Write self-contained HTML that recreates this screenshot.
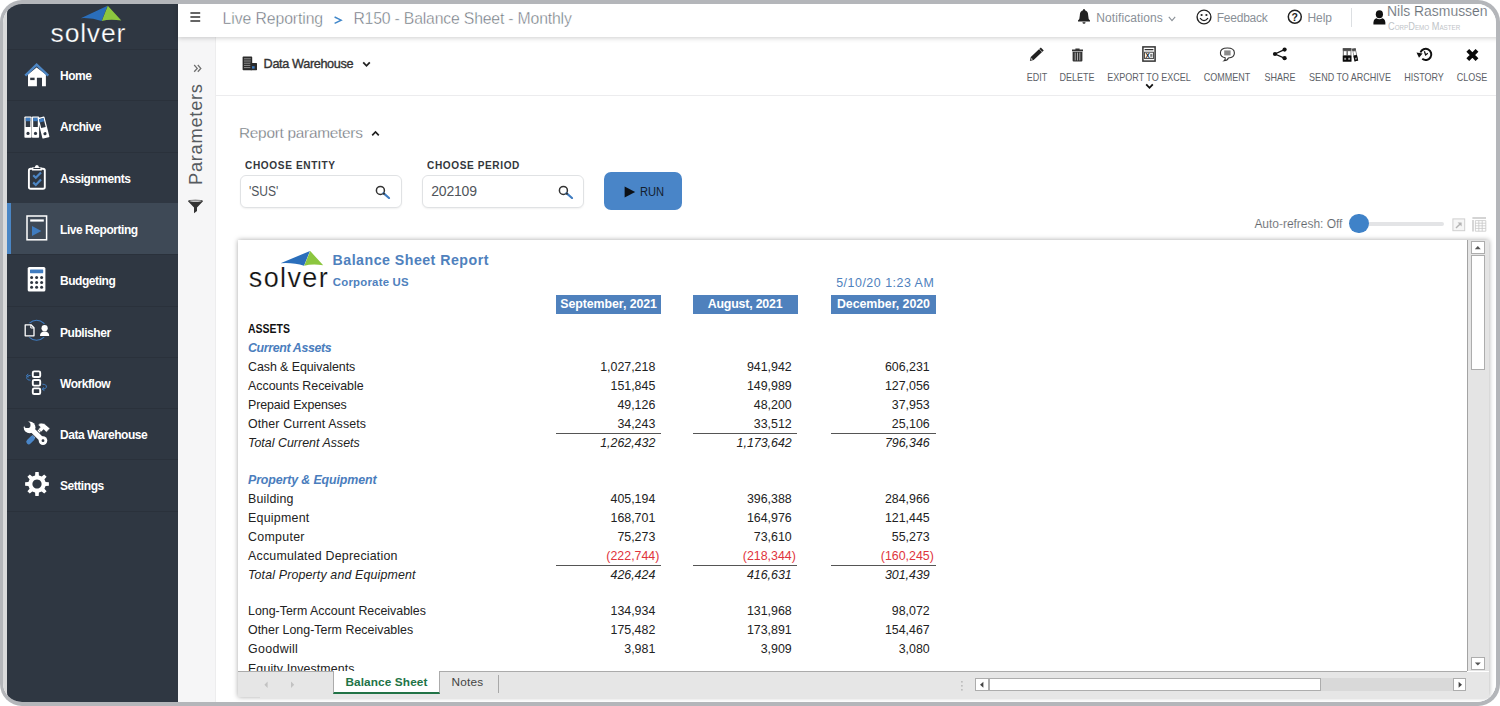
<!DOCTYPE html>
<html lang="en">
<head>
<meta charset="utf-8">
<title>Solver - Live Reporting - R150 - Balance Sheet - Monthly</title>
<style>
*{box-sizing:border-box;margin:0;padding:0}
html,body{width:1500px;height:706px;overflow:hidden;background:#fff;font-family:"Liberation Sans",sans-serif;}
body{position:relative}
.abs{position:absolute}
#frame{position:absolute;left:0;top:0;width:1500px;height:706px;border-radius:22px;background:#b4b6ba;overflow:hidden}
#inner{position:absolute;left:3px;top:4px;width:1493px;height:698px;border-radius:19px;background:#fff;overflow:hidden}
/* everything inside #app is positioned in page coordinates */
#app{position:absolute;left:-3px;top:-4px;width:1500px;height:706px}
#leftstrip{position:absolute;left:3px;top:0;width:5px;height:706px;background:#d9dadb}
#sidebar{position:absolute;left:7px;top:0;width:171px;height:706px;background:#2f3742;border-radius:14px 0 0 14px}
.mi{position:absolute;left:0;width:171px;height:51.3px;box-shadow:inset 0 1px 0 #2a313b;color:#fff;font-weight:bold;font-size:12.5px}
.mi span{position:absolute;left:53px;top:20px;white-space:nowrap;letter-spacing:-0.45px;font-size:12px;line-height:14px}
.mi.active{background:#3e4956;box-shadow:inset 4px 0 0 #4a86c5}
.mi svg{position:absolute}
#topbar{position:absolute;left:178px;top:0;width:1322px;height:37px;background:#fff;box-shadow:0 1px 5px rgba(0,0,0,.2);z-index:5}
#pstrip{position:absolute;left:178px;top:37px;width:38px;height:669px;background:#f6f6f7;border-right:1px solid #ededee}
#content{position:absolute;left:216px;top:37px;width:1284px;height:669px;background:#fff}
.crumb{position:absolute;top:9.5px;font-size:15.8px;line-height:18px;-webkit-text-stroke:0.4px #fff;color:#69717a;white-space:nowrap}
.tt{top:11px;font-size:12px;color:#8a9097;white-space:nowrap;line-height:14px}
.tb{position:absolute;font-size:10.3px;line-height:12px;color:#5c6167;white-space:nowrap;text-align:center;transform:translateX(-50%) scaleX(0.875)}
.lbl{position:absolute;font-size:11.2px;line-height:13px;font-weight:bold;color:#33373c;letter-spacing:0.72px;white-space:nowrap;transform-origin:0 50%;transform:scaleX(0.9)}
.inp{position:absolute;height:33px;border:1px solid #e0e2e4;border-radius:6px;background:#fff;font-size:14px;line-height:16px;color:#50555b;padding:7.4px 0 0 8.2px;box-shadow:0 1px 2px rgba(0,0,0,.06);white-space:nowrap}
#panel{position:absolute;left:238px;top:240px;width:1251px;height:457px;background:#fff;box-shadow:0 0 5px rgba(0,0,0,.35)}
.r{position:absolute;font-size:12.4px;line-height:16px;color:#222;white-space:nowrap}
.n{position:absolute;font-size:12.4px;line-height:16px;color:#222;white-space:nowrap;text-align:right;width:120px}
.i{font-style:italic}
.red{color:#e0343c}
.hd{position:absolute;height:19px;background:#4f81bd;color:#fff;font-weight:bold;font-size:12.4px;line-height:16px;text-align:center;padding-top:1.6px;white-space:nowrap}
.sbtn{background:#fff;border:1px solid #adadad}
.ul{position:absolute;height:1px;background:#555}
</style>
</head>
<body>
<div id="frame"><div id="inner"><div id="app">
<div id="leftstrip"></div>
<div id="sidebar">
<!-- logo -->
<svg class="abs" style="left:70px;top:3px" width="50" height="22" viewBox="77 3 50 22">
<path d="M80.8,18.2 L107.6,5.8 L101.6,21 Q92,17.6 80.8,18.2Z" fill="#2a6ebb"/>
<path d="M107.8,5.8 L121.3,20.6 Q110,18.8 101.8,21Z" fill="#8cc63f"/>
</svg>
<div class="abs" id="logotxt" style="left:43.6px;top:18px;font-size:26.5px;color:#fff;letter-spacing:0.8px;white-space:nowrap;line-height:30px;-webkit-text-stroke:0.25px #2f3742">solver</div>

<div class="mi" style="top:49px"><span>Home</span>
<svg style="left:17px;top:13px" width="26" height="25" viewBox="24 62 26 25">
<path d="M28,74.6 L36.6,67.4 L45.9,74.6 V86.2 H42 V77.7 H36.9 V86.2 H28Z" fill="#fff"/>
<rect x="30.2" y="77.7" width="4.4" height="2.4" fill="#2f3742"/>
<path d="M25.3,75.6 L36.6,64.6 L48.3,75.6" fill="none" stroke="#4d86c4" stroke-width="2.4" stroke-linejoin="miter"/>
</svg></div>

<div class="mi" style="top:100.3px"><span>Archive</span>
<svg style="left:16px;top:15px" width="28" height="24" viewBox="23 115 28 24">
<g><rect x="24.4" y="116.4" width="7.2" height="21.3" rx="0.8" fill="#fff"/><rect x="25.7" y="117.8" width="4.6" height="9.2" fill="#2f3742"/><rect x="25.7" y="117.8" width="4.6" height="3.4" fill="#3f7cc0"/><circle cx="28" cy="133.4" r="1.6" fill="#2f3742"/></g>
<g transform="translate(7.5 0)"><rect x="24.4" y="116.4" width="7.2" height="21.3" rx="0.8" fill="#fff"/><rect x="25.7" y="117.8" width="4.6" height="9.2" fill="#2f3742"/><rect x="25.7" y="117.8" width="4.6" height="3.4" fill="#3f7cc0"/><circle cx="28" cy="133.4" r="1.6" fill="#2f3742"/></g>
<g transform="rotate(-14 43 127) translate(15.3 0.6)"><rect x="24.4" y="116.4" width="7.2" height="21.3" rx="0.8" fill="#fff"/><rect x="25.7" y="117.8" width="4.6" height="9.2" fill="#2f3742"/><rect x="25.7" y="117.8" width="4.6" height="3.4" fill="#3f7cc0"/><circle cx="28" cy="133.4" r="1.6" fill="#2f3742"/></g>
</svg></div>

<div class="mi" style="top:151.6px"><span>Assignments</span>
<svg style="left:19px;top:11px" width="22" height="28" viewBox="26 162 22 28">
<rect x="28.9" y="167.7" width="15.9" height="20.1" rx="1.8" fill="none" stroke="#fff" stroke-width="1.9"/>
<path d="M32,169.4 V166.6 H34.8 Q34.9,164.1 36.9,164.1 Q38.9,164.1 39,166.6 H41.8 V169.4Z" fill="#fff"/>
<rect x="33.4" y="167" width="7" height="1" fill="#2f3742"/>
<path d="M33.2,174.2 L35.8,176.8 L41,171.4" fill="none" stroke="#4d86c4" stroke-width="2.2"/>
<path d="M33.2,181.4 L35.8,184 L41,178.6" fill="none" stroke="#4d86c4" stroke-width="2.2"/>
</svg></div>

<div class="mi active" style="top:202.9px"><span>Live Reporting</span>
<svg style="left:18px;top:11.1px" width="24" height="28" viewBox="25 214 24 28">
<rect x="27" y="216" width="19.6" height="23.8" fill="none" stroke="#fff" stroke-width="1.5"/>
<rect x="30.2" y="219.4" width="13.6" height="2.2" fill="#fff"/>
<path d="M32,226 L41.4,231 L32,236Z" fill="#3f7cc0"/>
</svg></div>

<div class="mi" style="top:254.2px"><span>Budgeting</span>
<svg style="left:19px;top:11px" width="22" height="28" viewBox="26 265 22 28">
<rect x="27.7" y="267" width="17.7" height="24.6" rx="1.6" fill="#fff"/>
<rect x="30" y="269.4" width="13.2" height="3.8" rx="0.6" fill="#3f7cc0"/>
<g fill="#2f3742"><circle cx="31.6" cy="277.6" r="1.5"/><circle cx="36.6" cy="277.6" r="1.5"/><circle cx="41.6" cy="277.6" r="1.5"/><circle cx="31.6" cy="282.4" r="1.5"/><circle cx="36.6" cy="282.4" r="1.5"/><circle cx="41.6" cy="282.4" r="1.5"/><circle cx="31.6" cy="287.2" r="1.5"/><circle cx="36.6" cy="287.2" r="1.5"/><circle cx="41.6" cy="287.2" r="1.5"/></g>
</svg></div>

<div class="mi" style="top:305.5px"><span>Publisher</span>
<svg style="left:16px;top:12px" width="28" height="26" viewBox="23 318 28 26">
<circle cx="36.6" cy="330.3" r="10" fill="none" stroke="#3f7cc0" stroke-width="1.1"/>
<rect x="23.6" y="323.2" width="12" height="14" fill="#2f3742"/>
<rect x="38.8" y="324" width="11.6" height="13" fill="#2f3742"/>
<path d="M25.2,324.8 H31 L34,327.8 V335.8 H25.2Z" fill="none" stroke="#fff" stroke-width="1.3" stroke-linejoin="round"/>
<path d="M30.8,324.8 V328 H34" fill="none" stroke="#fff" stroke-width="1"/>
<circle cx="44.6" cy="328.2" r="3.1" fill="#fff"/>
<path d="M40,336 Q40,331.4 44.6,331.4 Q49.2,331.4 49.2,336Z" fill="#fff"/>
</svg></div>

<div class="mi" style="top:356.8px"><span>Workflow</span>
<svg style="left:17px;top:12px" width="26" height="28" viewBox="24 369 26 28">
<g fill="none" stroke="#fff" stroke-width="1.9"><rect x="32.8" y="371.4" width="7.4" height="5.6" rx="1.3"/><rect x="32.8" y="380" width="7.4" height="5.6" rx="1.3"/><rect x="32.8" y="388.4" width="7.4" height="5.6" rx="1.3"/></g>
<path d="M30.6,375.4 Q26.2,375.4 26.8,378.4 Q27.4,380.4 30.6,380.2" fill="none" stroke="#3f7cc0" stroke-width="1"/>
<path d="M28.2,373.8 L26.4,376 L28.8,377" fill="none" stroke="#3f7cc0" stroke-width="1"/>
<path d="M42.4,384.2 Q46.8,384.2 46.4,387.2 Q45.8,389.4 42.4,389" fill="none" stroke="#3f7cc0" stroke-width="1"/>
<path d="M44,387.4 L42.2,389.2 L44.4,390.6" fill="none" stroke="#3f7cc0" stroke-width="1"/>
</svg></div>

<div class="mi" style="top:408.1px"><span>Data Warehouse</span>
<svg style="left:15px;top:12px" width="30" height="26" viewBox="22 420 30 26">
<path d="M41.6,428.6 L32,438.4" stroke="#fff" stroke-width="3" fill="none"/>
<path d="M32.4,438.2 L28.8,441.8" stroke="#4a86c8" stroke-width="5" stroke-linecap="round" fill="none"/>
<path d="M29.6,427.4 L43,440.6" stroke="#2f3742" stroke-width="6.6" fill="none"/>
<circle cx="29.6" cy="427.4" r="5.9" fill="#fff"/>
<path d="M29.6,427.4 L43,440.6" stroke="#fff" stroke-width="5" fill="none"/>
<circle cx="43" cy="440.6" r="4.3" fill="#fff"/>
<circle cx="43" cy="440.7" r="1.4" fill="#2f3742"/>
<circle cx="27.3" cy="424.9" r="3.2" fill="#2f3742"/>
<path d="M27.3,424.9 L22.6,420.2" stroke="#2f3742" stroke-width="5.2" fill="none"/>
<path d="M37.6,425.2 Q40.4,421.8 44.2,423.6 L50,428.4 L46.4,432.2 L43.6,429.6 L41.2,432 L38.4,429.2 L40.2,427.2 Q39.4,425.4 37.6,425.2Z" fill="#fff" stroke="#2f3742" stroke-width="0.6"/>
</svg></div>

<div class="mi" style="top:459.4px"><span>Settings</span>
<svg style="left:17.6px;top:12.8px" width="24" height="24" viewBox="0 0 24 24">
<path fill-rule="evenodd" fill="#fff" d="M10.08,3.41 L10.31,0.12 L13.69,0.12 L13.92,3.41 L16.72,4.57 L19.21,2.40 L21.60,4.79 L19.43,7.28 L20.59,10.08 L23.88,10.31 L23.88,13.69 L20.59,13.92 L19.43,16.72 L21.60,19.21 L19.21,21.60 L16.72,19.43 L13.92,20.59 L13.69,23.88 L10.31,23.88 L10.08,20.59 L7.28,19.43 L4.79,21.60 L2.40,19.21 L4.57,16.72 L3.41,13.92 L0.12,13.69 L0.12,10.31 L3.41,10.08 L4.57,7.28 L2.40,4.79 L4.79,2.40 L7.28,4.57Z M12,7.4 a4.6,4.6 0 1 0 0.01,0Z"/>
</svg></div>
<div class="mi" style="top:510.7px;height:1px"></div>
</div>
<div id="pstrip"><div class="abs" style="left:-178px;top:-37px;width:1500px;height:706px">
<svg class="abs" style="left:192.6px;top:64.4px" width="10" height="9" viewBox="0 0 10 9"><path d="M1.2,1 L4.2,4.4 L1.2,7.8 M4.8,1 L7.8,4.4 L4.8,7.8" fill="none" stroke="#707070" stroke-width="1.3"/></svg>
<div class="abs" style="left:185px;top:185.4px;transform-origin:0 0;transform:rotate(-90deg);font-size:18.3px;line-height:22px;letter-spacing:0.72px;color:#565b60;white-space:nowrap">Parameters</div>
<svg class="abs" style="left:187px;top:199px" width="17" height="15" viewBox="0 0 17 15"><path d="M1,2.2 Q1,0.8 8.4,0.8 Q16,0.8 16,2.2 L10,8.4 V12 L7,14.2 V8.4Z" fill="#333"/><ellipse cx="8.5" cy="2.1" rx="6.2" ry="0.7" fill="#f6f6f7"/></svg>
</div></div>
<div id="content"><div class="abs" style="left:-216px;top:-37px;width:1500px;height:706px">

<!-- report parameters -->
<div class="abs" style="left:239px;top:124.4px;font-size:15.4px;line-height:18px;color:#6b7178;letter-spacing:-0.28px;white-space:nowrap;-webkit-text-stroke:0.3px #fff">Report parameters</div>
<svg class="abs" style="left:371px;top:129.6px" width="9" height="7" viewBox="0 0 9 7"><path d="M1.2,5.4 L4.5,2 L7.8,5.4" fill="none" stroke="#222" stroke-width="1.7"/></svg>
<div class="lbl" style="left:245px;top:159.2px">CHOOSE ENTITY</div>
<div class="lbl" style="left:427px;top:159.2px;letter-spacing:0.68px">CHOOSE PERIOD</div>
<div class="inp" style="left:239.6px;top:175px;width:162.2px"><span style="display:inline-block;transform-origin:0 50%;transform:scaleX(0.86)">'SUS'</span></div>
<div class="inp" style="left:422px;top:175px;width:162.2px;letter-spacing:-0.18px">202109</div>
<svg class="abs mag" style="left:375.4px;top:184.6px" width="16" height="14" viewBox="0 0 16 14"><circle cx="5.4" cy="5.4" r="4" fill="none" stroke="#333" stroke-width="1.5"/><path d="M8.4,8.2 L14,13" stroke="#3f7cc0" stroke-width="2.2" stroke-linecap="round"/><path d="M8.2,8 L9.6,9.2" stroke="#333" stroke-width="1.8"/></svg>
<svg class="abs mag" style="left:557.8px;top:184.6px" width="16" height="14" viewBox="0 0 16 14"><circle cx="5.4" cy="5.4" r="4" fill="none" stroke="#333" stroke-width="1.5"/><path d="M8.4,8.2 L14,13" stroke="#3f7cc0" stroke-width="2.2" stroke-linecap="round"/><path d="M8.2,8 L9.6,9.2" stroke="#333" stroke-width="1.8"/></svg>
<div class="abs" style="left:603.6px;top:171.8px;width:78px;height:38.2px;border-radius:7px;background:#4985c8"></div>
<svg class="abs" style="left:623.6px;top:186.2px" width="12" height="12" viewBox="0 0 12 12"><path d="M0.6,0.4 L11.2,6 L0.6,11.6Z" fill="#0c1016"/></svg>
<div class="abs" style="left:640.2px;top:185.4px;font-size:12px;line-height:14px;color:#14202e;white-space:nowrap;transform-origin:0 50%;transform:scaleX(0.93)">RUN</div>
<!-- auto refresh -->
<div class="abs" style="left:1254.4px;top:217px;font-size:12px;line-height:14px;color:#62676c;white-space:nowrap;letter-spacing:-0.03px;-webkit-text-stroke:0.12px #fff">Auto-refresh: Off</div>
<div class="abs" style="left:1356px;top:222.2px;width:88.4px;height:4.2px;border-radius:2px;background:#e3e4e6"></div>
<div class="abs" style="left:1349.2px;top:214px;width:19.4px;height:19.4px;border-radius:50%;background:#3f82c8"></div>
<svg class="abs" style="left:1452px;top:218px" width="14" height="14" viewBox="0 0 14 14"><rect x="0.9" y="0.9" width="11.8" height="11.8" fill="#f6f6f6" stroke="#cfcfcf" stroke-width="1"/><path d="M4,10 L8.6,5.4" stroke="#b3b3b3" stroke-width="1.4"/><path d="M5.6,4.4 H9.6 V8.4Z" fill="#b3b3b3"/></svg>
<svg class="abs" style="left:1472px;top:216.6px" width="15" height="15" viewBox="0 0 15 15"><g stroke="#c6c6c6" fill="none"><path d="M0.4,1 H14 " stroke-width="1.4"/><path d="M1,3 V14.4" stroke-width="1.4"/><path d="M3.4,3.6 H13.8 V14.2 H3.4Z M3.4,6.2 H13.8 M3.4,8.8 H13.8 M3.4,11.4 H13.8 M6.8,3.6 V14.2 M10.2,3.6 V14.2" stroke-width="0.8"/></g></svg>
<!-- toolbar bottom line -->
<div class="abs" style="left:216px;top:95px;width:1284px;height:1px;background:#ececee"></div>
<!-- Data warehouse selector -->
<svg class="abs" style="left:242px;top:56px" width="16" height="15" viewBox="0 0 16 15">
<rect x="0.6" y="0.6" width="9.6" height="13.6" rx="0.8" fill="#2b2b2b"/>
<g stroke="#bbb" stroke-width="0.7"><path d="M2,2.8 H8.8 M2,5 H8.8 M2,7.2 H8.8 M2,9.4 H8.8 M2,11.6 H8.8"/></g>
<rect x="8.4" y="7" width="6.6" height="7.2" rx="0.6" fill="#2b2b2b"/>
<rect x="10" y="10.2" width="2.6" height="2.4" fill="#3f7cc0"/>
</svg>
<div class="abs" style="left:263.6px;top:56.6px;font-size:12.7px;color:#333;letter-spacing:-0.37px;white-space:nowrap;line-height:14px;-webkit-text-stroke:0.35px #333">Data Warehouse</div>
<svg class="abs" style="left:361.6px;top:61.4px" width="9" height="7" viewBox="0 0 9 7"><path d="M1.2,1.4 L4.5,4.8 L7.8,1.4" fill="none" stroke="#222" stroke-width="1.8"/></svg>

<!-- toolbar icons -->
<!-- edit -->
<svg class="abs" style="left:1028px;top:46px" width="18" height="17" viewBox="1028 46 18 17">
<path d="M1029.90,60.90 L1033.65,60.12 L1043.75,50.52 L1040.85,47.48 L1030.75,57.08Z" fill="#222"/>
<path d="M1042.15,52.04 L1039.26,48.99" stroke="#fff" stroke-width="0.6"/>
<path d="M1033.03,59.47 L1031.37,57.73 L1030.70,60.14Z" fill="#aaa"/>
</svg>
<div class="tb" style="left:1037px;top:72px">EDIT</div>
<!-- delete -->
<svg class="abs" style="left:1071px;top:48px" width="13" height="14" viewBox="0 0 13 14"><path d="M4.4,0.4 H8.6 V1.6 H12 V3.2 H1 V1.6 H4.4Z" fill="#333"/><path d="M1.6,3.8 H11.4 V12.6 Q11.4,13.6 10.4,13.6 H2.6 Q1.6,13.6 1.6,12.6Z" fill="#333"/><path d="M4.2,4.6 V12.4 M6.5,4.6 V12.4 M8.8,4.6 V12.4" stroke="#bbb" stroke-width="0.9"/></svg>
<div class="tb" style="left:1077.4px;top:72px">DELETE</div>
<!-- export -->
<svg class="abs" style="left:1142px;top:46.4px" width="14" height="16" viewBox="0 0 14 16"><rect x="0.9" y="0.9" width="12.2" height="14.2" fill="none" stroke="#333" stroke-width="1.5"/><path d="M2.6,3.6 H11.4" stroke="#333" stroke-width="1.4"/><rect x="2.6" y="6.2" width="8.8" height="6.4" fill="#fff" stroke="#333" stroke-width="0.9"/><text x="3.4" y="11.8" font-family="Liberation Sans, sans-serif" font-weight="bold" font-size="6.4" fill="#111">X</text><path d="M8.2,8.4 H10.4 M8.2,9.6 H10.4 M8.2,10.8 H10.4" stroke="#111" stroke-width="0.6"/></svg>
<div class="tb" style="left:1148.7px;top:72px">EXPORT TO EXCEL</div>
<svg class="abs" style="left:1144.6px;top:82.6px" width="9" height="7" viewBox="0 0 9 7"><path d="M1.2,1.4 L4.5,4.8 L7.8,1.4" fill="none" stroke="#111" stroke-width="1.8"/></svg>
<!-- comment -->
<svg class="abs" style="left:1219px;top:46.6px" width="17" height="15" viewBox="0 0 17 15"><path d="M8.4,1 Q15.4,1 15.4,6 Q15.4,10.6 9.4,11 Q8.6,13.4 5,13.8 Q6.6,12.4 6.2,10.8 Q1.4,9.8 1.4,6 Q1.4,1 8.4,1Z" fill="#fff" stroke="#333" stroke-width="1.1"/><rect x="5.2" y="3.4" width="6.4" height="5" fill="#8a8a8a"/></svg>
<div class="tb" style="left:1227.4px;top:72px">COMMENT</div>
<!-- share -->
<svg class="abs" style="left:1272px;top:47.4px" width="16" height="14" viewBox="0 0 16 14"><path d="M12.4,2.6 L3,7 L12.4,11.2" fill="none" stroke="#111" stroke-width="1.3"/><circle cx="12.6" cy="2.6" r="2.1" fill="#111"/><circle cx="3" cy="7" r="2.1" fill="#111"/><circle cx="12.6" cy="11.2" r="2.1" fill="#111"/></svg>
<div class="tb" style="left:1280.2px;top:72px">SHARE</div>
<!-- archive -->
<svg class="abs" style="left:1342px;top:47px" width="18" height="16" viewBox="1342 47 18 16">
<rect x="1342.8" y="48.2" width="8.6" height="13.4" fill="#777"/>
<rect x="1342.8" y="48.2" width="8.6" height="2.4" fill="#4a4a4a"/>
<rect x="1343.9" y="51.2" width="2.5" height="4" fill="#fff"/><rect x="1348" y="51.2" width="2.5" height="4" fill="#fff"/>
<rect x="1342.8" y="55.6" width="8.6" height="6" fill="#0a0a0a"/>
<rect x="1344.2" y="57.8" width="1.9" height="2" fill="#9a9a9a"/><rect x="1348.2" y="57.8" width="1.9" height="2" fill="#9a9a9a"/>
<path d="M1352,48.8 L1355.6,48.2 L1358.2,60.6 L1354.6,61.5Z" fill="#777"/>
<path d="M1352,48.8 L1355.6,48.2 L1356,50.2 L1352.4,50.9Z" fill="#4a4a4a"/>
<path d="M1353.2,51.6 L1355.4,51.2 L1356.2,54.8 L1354,55.3Z" fill="#fff"/>
<path d="M1353.3,55.8 L1356.9,55 L1358.2,60.6 L1354.6,61.5Z" fill="#0a0a0a"/>
<path d="M1355,57.9 L1356.6,57.5 L1357,59.3 L1355.4,59.7Z" fill="#9a9a9a"/>
</svg>
<div class="tb" style="left:1350px;top:72px">SEND TO ARCHIVE</div>
<!-- history -->
<svg class="abs" style="left:1415px;top:46px" width="19" height="17" viewBox="1415 46 19 17">
<path d="M1420.44,52.48 A5.6,5.6 0 1 1 1422.25,58.81" fill="none" stroke="#111" stroke-width="2"/>
<path d="M1416.5,52.6 L1422.6,53.6 L1419,57.8Z" fill="#111"/>
<path d="M1424.4,51.2 L1425.6,54.9 L1427.8,53.2" fill="none" stroke="#111" stroke-width="1.3"/>
</svg>
<div class="tb" style="left:1424.4px;top:72px">HISTORY</div>
<!-- close -->
<svg class="abs" style="left:1465px;top:47.6px" width="15" height="14" viewBox="0 0 15 14"><path d="M2.8,2.4 L12,11.6 M12,2.4 L2.8,11.6" stroke="#0a0a0a" stroke-width="4" stroke-linecap="butt"/></svg>
<div class="tb" style="left:1472px;top:72px">CLOSE</div>
</div></div>
<div id="topbar">
<!-- hamburger -->
<svg class="abs" style="left:12px;top:11px" width="11" height="12" viewBox="0 0 11 12"><path d="M0.4,2 H10.2 M0.4,6 H10.2 M0.4,10 H10.2" stroke="#333" stroke-width="1.7"/></svg>
<div class="crumb" style="left:44.6px;letter-spacing:-0.1px">Live Reporting</div>
<svg class="abs" style="left:155px;top:15px" width="10" height="10" viewBox="0 0 10 10"><path d="M1.6,2 L8.2,5.2 L1.6,8.4" fill="none" stroke="#3f86c9" stroke-width="1.4"/></svg>
<div class="crumb" style="left:175.4px;letter-spacing:-0.19px">R150 - Balance Sheet - Monthly</div>

<!-- bell -->
<svg class="abs" style="left:899px;top:8px" width="14" height="17" viewBox="0 0 14 17"><path d="M7,1 Q8,1 8,2.2 Q11.2,3.2 11.2,7.4 Q11.2,11 13,12.6 V13.4 H1 V12.6 Q2.8,11 2.8,7.4 Q2.8,3.2 6,2.2 Q6,1 7,1Z M5.4,14.2 H8.6 Q8.4,15.8 7,15.8 Q5.6,15.8 5.4,14.2Z" fill="#222"/></svg>
<div class="abs tt" style="left:918.3px;letter-spacing:0.1px">Notifications</div>
<svg class="abs" style="left:989.6px;top:16px" width="8" height="6" viewBox="0 0 8 6"><path d="M0.8,0.8 L4,4.6 L7.2,0.8" fill="none" stroke="#8a9097" stroke-width="1.1"/></svg>
<!-- smiley -->
<svg class="abs" style="left:1018px;top:8.6px" width="16" height="16" viewBox="0 0 16 16"><circle cx="8" cy="8" r="6.9" fill="none" stroke="#222" stroke-width="1.4"/><circle cx="5.6" cy="6" r="1.1" fill="#222"/><circle cx="10.4" cy="6" r="1.1" fill="#222"/><path d="M4,9.2 Q8,14 12,9.2" fill="none" stroke="#222" stroke-width="1.3"/></svg>
<div class="abs tt" style="left:1038.7px;letter-spacing:-0.22px">Feedback</div>
<!-- help -->
<svg class="abs" style="left:1109px;top:8.9px" width="16" height="16" viewBox="0 0 16 16"><circle cx="7.8" cy="7.8" r="6.5" fill="none" stroke="#222" stroke-width="1.5"/><text x="7.8" y="11.6" text-anchor="middle" font-family="Liberation Sans, sans-serif" font-weight="bold" font-size="10.5" fill="#222">?</text></svg>
<div class="abs tt" style="left:1129.5px;letter-spacing:-0.1px">Help</div>
<div class="abs" style="left:1172.5px;top:8px;width:1px;height:19px;background:#dcdfe2"></div>
<!-- user -->
<svg class="abs" style="left:1194.6px;top:9.6px" width="13" height="15" viewBox="0 0 13 15"><ellipse cx="6.4" cy="4.2" rx="3.6" ry="4" fill="#111"/><path d="M0.4,14.6 Q0,9 3.4,8.2 Q6.4,10.4 9.4,8.2 Q12.8,9 12.4,14.6Z" fill="#111"/></svg>
<div class="abs" style="left:1209.4px;top:2.4px;font-size:15.5px;color:#6b727a;white-space:nowrap;line-height:18px;transform-origin:0 50%;transform:scaleX(0.898);-webkit-text-stroke:0.15px #fff">Nils Rasmussen</div>
<div class="abs" style="left:1209.6px;top:20.8px;font-size:10.3px;color:#c0c4c8;white-space:nowrap;font-variant:small-caps;line-height:11px;transform-origin:0 50%;transform:scaleX(0.895)">CorpDemo Master</div>
</div>
<div id="panel">
<div class="abs" id="sheet" style="left:0;top:0;width:1230px;height:431px;overflow:hidden">
<!-- report logo -->
<svg class="abs" style="left:40.0px;top:9.0px" width="48" height="19" viewBox="278 249 48 19">
<path d="M280.6,263.2 L310,251 L304,265.8 Q294,262.4 280.6,263.2Z" fill="#2a6ebb"/>
<path d="M310.2,251 L323.2,265.2 Q312,263.4 304.2,265.8Z" fill="#8cc63f"/>
</svg>
<div class="abs" style="left:10.8px;top:23.2px;font-size:27px;line-height:30px;color:#111;letter-spacing:1.36px;white-space:nowrap;-webkit-text-stroke:0.2px #fff">solver</div>
<div class="abs" style="left:94.6px;top:12.2px;font-size:14.2px;line-height:17px;font-weight:bold;color:#4f81bd;letter-spacing:0.48px;white-space:nowrap">Balance Sheet Report</div>
<div class="abs" style="left:94.8px;top:35.2px;font-size:11.4px;line-height:14px;font-weight:bold;color:#4f81bd;letter-spacing:0.22px;white-space:nowrap">Corporate US</div>
<div class="abs" style="left:598.2px;top:34.5px;font-size:12.4px;line-height:16px;color:#4f81bd;letter-spacing:0.52px;white-space:nowrap">5/10/20 1:23 AM</div>
<div class="hd" style="left:318px;top:54.5px;width:105.2px;letter-spacing:-0.08px">September, 2021</div>
<div class="hd" style="left:454.6px;top:54.5px;width:105px;letter-spacing:-0.2px">August, 2021</div>
<div class="hd" style="left:592.7px;top:54.5px;width:105.5px;letter-spacing:-0.05px">December, 2020</div>
<div class="r" style="left:10.0px;top:80.8px;letter-spacing:0px;color:#111;font-weight:bold;transform-origin:0 50%;transform:scaleX(0.845)">ASSETS</div>
<div class="r" style="left:10.0px;top:100.0px;letter-spacing:-0.36px;color:#4a7dbd;font-weight:bold;font-style:italic">Current Assets</div>
<div class="r" style="left:10.0px;top:119.0px;letter-spacing:-0.05px;color:#222">Cash &amp; Equivalents</div>
<div class="n" style="left:297.3px;top:119.0px">1,027,218</div>
<div class="n" style="left:433.7px;top:119.0px">941,942</div>
<div class="n" style="left:571.7px;top:119.0px">606,231</div>
<div class="r" style="left:10.0px;top:137.9px;letter-spacing:-0.01px;color:#222">Accounts Receivable</div>
<div class="n" style="left:297.3px;top:137.9px">151,845</div>
<div class="n" style="left:433.7px;top:137.9px">149,989</div>
<div class="n" style="left:571.7px;top:137.9px">127,056</div>
<div class="r" style="left:10.0px;top:156.9px;letter-spacing:-0.12px;color:#222">Prepaid Expenses</div>
<div class="n" style="left:297.3px;top:156.9px">49,126</div>
<div class="n" style="left:433.7px;top:156.9px">48,200</div>
<div class="n" style="left:571.7px;top:156.9px">37,953</div>
<div class="r" style="left:10.0px;top:175.9px;letter-spacing:0.12px;color:#222">Other Current Assets</div>
<div class="n" style="left:297.3px;top:175.9px">34,243</div>
<div class="n" style="left:433.7px;top:175.9px">33,512</div>
<div class="n" style="left:571.7px;top:175.9px">25,106</div>
<div class="r" style="left:10.0px;top:194.8px;letter-spacing:0.02px;color:#222;font-style:italic">Total Current Assets</div>
<div class="n i" style="left:297.3px;top:194.8px">1,262,432</div>
<div class="n i" style="left:433.7px;top:194.8px">1,173,642</div>
<div class="n i" style="left:571.7px;top:194.8px">796,346</div>
<div class="r" style="left:10.0px;top:232.1px;letter-spacing:-0.12px;color:#4a7dbd;font-weight:bold;font-style:italic">Property &amp; Equipment</div>
<div class="r" style="left:10.0px;top:250.9px;letter-spacing:0.19px;color:#222">Building</div>
<div class="n" style="left:297.3px;top:250.9px">405,194</div>
<div class="n" style="left:433.7px;top:250.9px">396,388</div>
<div class="n" style="left:571.7px;top:250.9px">284,966</div>
<div class="r" style="left:10.0px;top:270.0px;letter-spacing:0.25px;color:#222">Equipment</div>
<div class="n" style="left:297.3px;top:270.0px">168,701</div>
<div class="n" style="left:433.7px;top:270.0px">164,976</div>
<div class="n" style="left:571.7px;top:270.0px">121,445</div>
<div class="r" style="left:10.0px;top:289.1px;letter-spacing:0.29px;color:#222">Computer</div>
<div class="n" style="left:297.3px;top:289.1px">75,273</div>
<div class="n" style="left:433.7px;top:289.1px">73,610</div>
<div class="n" style="left:571.7px;top:289.1px">55,273</div>
<div class="r" style="left:10.0px;top:307.8px;letter-spacing:0.21px;color:#222">Accumulated Depreciation</div>
<div class="n red" style="left:301.4px;top:307.8px">(222,744)</div>
<div class="n red" style="left:437.8px;top:307.8px">(218,344)</div>
<div class="n red" style="left:575.8px;top:307.8px">(160,245)</div>
<div class="r" style="left:10.0px;top:326.8px;letter-spacing:0.15px;color:#222;font-style:italic">Total Property and Equipment</div>
<div class="n i" style="left:297.3px;top:326.8px">426,424</div>
<div class="n i" style="left:433.7px;top:326.8px">416,631</div>
<div class="n i" style="left:571.7px;top:326.8px">301,439</div>
<div class="r" style="left:10.0px;top:363.0px;letter-spacing:0.01px;color:#222">Long-Term Account Receivables</div>
<div class="n" style="left:297.3px;top:363.0px">134,934</div>
<div class="n" style="left:433.7px;top:363.0px">131,968</div>
<div class="n" style="left:571.7px;top:363.0px">98,072</div>
<div class="r" style="left:10.0px;top:382.2px;letter-spacing:0.02px;color:#222">Other Long-Term Receivables</div>
<div class="n" style="left:297.3px;top:382.2px">175,482</div>
<div class="n" style="left:433.7px;top:382.2px">173,891</div>
<div class="n" style="left:571.7px;top:382.2px">154,467</div>
<div class="r" style="left:10.0px;top:401.1px;letter-spacing:0.33px;color:#222">Goodwill</div>
<div class="n" style="left:297.3px;top:401.1px">3,981</div>
<div class="n" style="left:433.7px;top:401.1px">3,909</div>
<div class="n" style="left:571.7px;top:401.1px">3,080</div>
<div class="r" style="left:10.0px;top:421.0px;letter-spacing:0.11px;color:#222">Equity Investments</div>
<div class="ul" style="left:318.0px;top:193.0px;width:105px"></div>
<div class="ul" style="left:455.0px;top:193.0px;width:104.4px"></div>
<div class="ul" style="left:593.4px;top:193.0px;width:104.6px"></div>
<div class="ul" style="left:318.0px;top:325.0px;width:105px"></div>
<div class="ul" style="left:455.0px;top:325.0px;width:104.4px"></div>
<div class="ul" style="left:593.4px;top:325.0px;width:104.6px"></div>
</div>
<!-- vertical scrollbar -->
<div class="abs" style="left:1228.6px;top:0;width:22.4px;height:431px;background:#e4e4e4;border-left:1px solid #a3a3a3"></div>
<div class="abs sbtn" style="left:1233.3px;top:0.8px;width:13.4px;height:13.4px"><svg width="12" height="12" viewBox="0 0 12 12" class="abs" style="left:0;top:0"><path d="M2.8,7.2 L5.8,4 L8.8,7.2Z" fill="#555"/></svg></div>
<div class="abs sbtn" style="left:1233.3px;top:14.6px;width:13.4px;height:115.2px"></div>
<div class="abs sbtn" style="left:1233.3px;top:416.6px;width:13.4px;height:13.4px"><svg width="12" height="12" viewBox="0 0 12 12" class="abs" style="left:0;top:0"><path d="M2.8,4.4 L5.8,7.6 L8.8,4.4Z" fill="#555"/></svg></div>
<!-- tab bar -->
<div class="abs" style="left:0;top:431.0px;width:1229px;height:26px;background:#e6e6e6;border-top:1px solid #ababab;box-shadow:22px 1px 0 #e6e6e6"></div>
<svg class="abs" style="left:24.0px;top:440.0px" width="36" height="10" viewBox="0 0 36 10"><path d="M5.6,1.4 V8 L2.4,4.7Z M29,1.4 V8 L32.2,4.7Z" fill="#c2c2c2"/></svg>
<div class="abs" style="left:95.2px;top:431.0px;width:106.8px;height:22.6px;background:#fff;border-left:1px solid #ababab;border-right:1px solid #ababab;border-bottom:2px solid #217346"></div>
<div class="abs" style="left:107.4px;top:435.2px;font-size:11.8px;line-height:14px;font-weight:bold;color:#217346;letter-spacing:0.12px;white-space:nowrap">Balance Sheet</div>
<div class="abs" style="left:213.6px;top:435.2px;font-size:11.8px;line-height:14px;color:#444;letter-spacing:0.2px;white-space:nowrap">Notes</div>
<div class="abs" style="left:260.0px;top:435.0px;width:1px;height:18px;background:#a8a8a8"></div>
<!-- horizontal scrollbar -->
<svg class="abs" style="left:721.6px;top:440.0px" width="4" height="12" viewBox="0 0 4 12"><g fill="#b5b5b5"><rect x="1.2" y="1" width="1.4" height="1.6"/><rect x="1.2" y="5" width="1.4" height="1.6"/><rect x="1.2" y="9" width="1.4" height="1.6"/></g></svg>
<div class="abs" style="left:751.0px;top:438.0px;width:464px;height:13.4px;background:#d9d9d9"></div>
<div class="abs sbtn" style="left:737.4px;top:438.0px;width:14px;height:13.4px"><svg width="12" height="12" viewBox="0 0 12 12" class="abs" style="left:0;top:0"><path d="M7.4,2.8 L4,5.8 L7.4,8.8Z" fill="#444"/></svg></div>
<div class="abs sbtn" style="left:751.0px;top:438.0px;width:331.6px;height:13.4px"></div>
<div class="abs sbtn" style="left:1214.8px;top:438.0px;width:13.6px;height:13.4px"><svg width="12" height="12" viewBox="0 0 12 12" class="abs" style="left:0;top:0"><path d="M4.6,2.8 L8,5.8 L4.6,8.8Z" fill="#444"/></svg></div>
</div>
</div></div></div>
</body>
</html>
